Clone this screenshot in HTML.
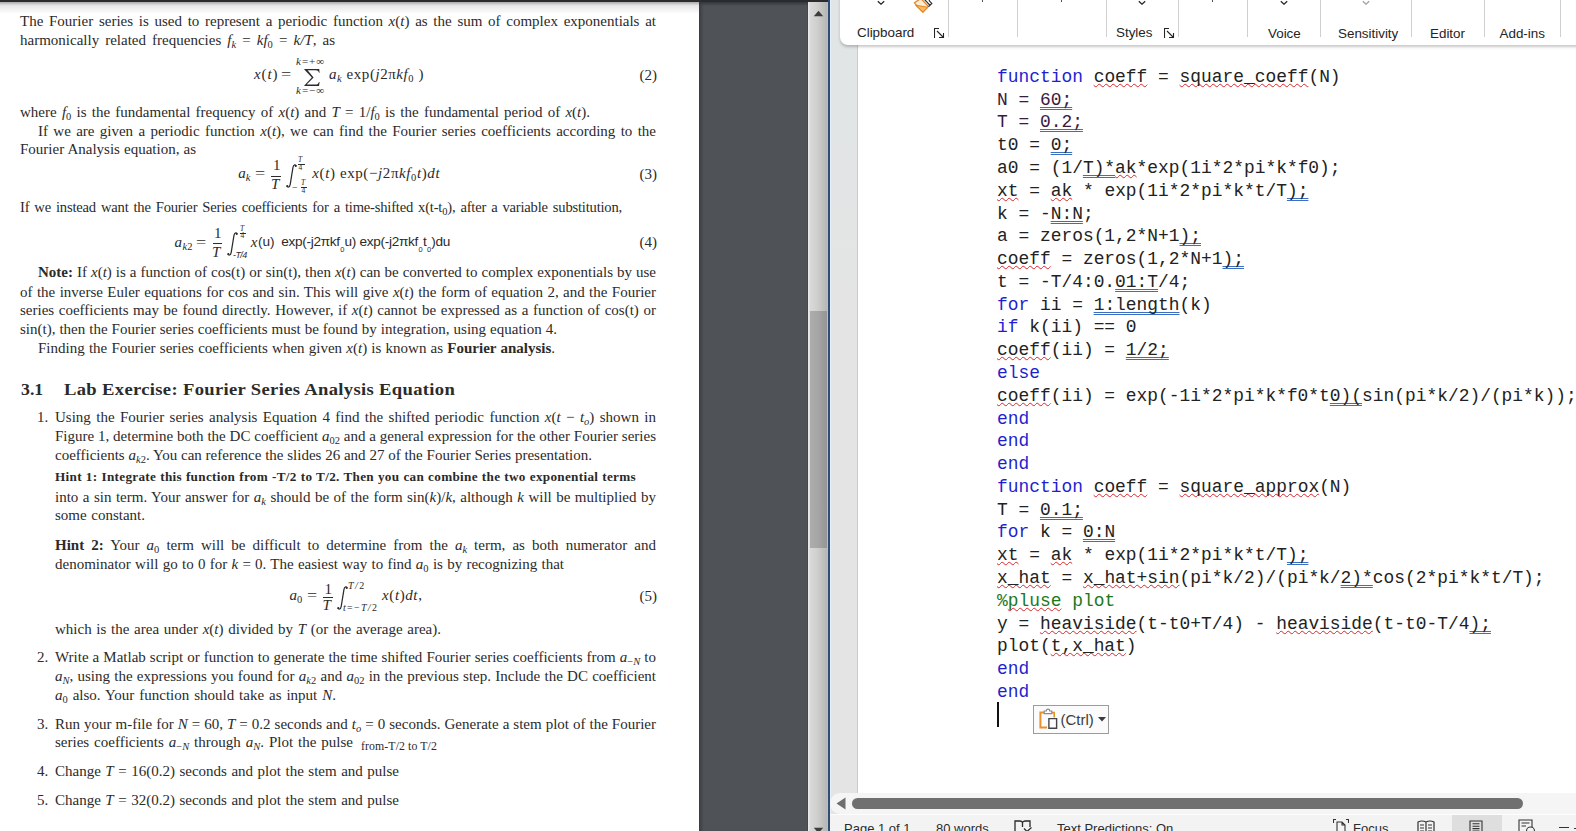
<!DOCTYPE html>
<html><head><meta charset="utf-8">
<style>
*{margin:0;padding:0;box-sizing:border-box}
html,body{width:1576px;height:831px;overflow:hidden;background:#fff;position:relative}
#pdf{position:absolute;left:0;top:0;width:699px;height:831px;background:#fff;overflow:hidden}
#topbar{position:absolute;left:0;top:0;width:828px;height:2px;background:#2a2b2e}
#topshadow{position:absolute;left:0;top:2px;width:699px;height:12px;background:linear-gradient(#a9a9a9,#e6e6e6 30%,rgba(255,255,255,0) 100%)}
#dark{position:absolute;left:699px;top:0;width:109px;height:831px;background:#4f5357;border-right:1px solid #45474a}
#darkshadow{position:absolute;left:699px;top:0;width:5px;height:831px;background:linear-gradient(90deg,#3a3d40,rgba(81,84,88,0))}
#darktop{position:absolute;left:699px;top:2px;width:109px;height:4px;background:linear-gradient(#33363a,rgba(81,84,88,0))}
#vscroll{position:absolute;left:808px;top:2px;width:20px;height:829px;background:linear-gradient(90deg,#e8e9ea 0,#e8e9ea 5%,#d9d9d9 10%,#cfcfce 45%,#c3c3c1 70%,#b5b7b7 95%,#c4c8cc 100%)}
#vthumb{position:absolute;left:810px;top:311px;width:17px;height:237px;background:linear-gradient(90deg,#adadad,#a5a5a5 50%,#9b9b9d 80%,#949695)}
#blue{position:absolute;left:828px;top:0;width:2px;height:831px;background:#334c72}
.t{position:absolute;font-family:"Liberation Serif",serif;font-size:15px;line-height:18px;height:18px;color:#2b2b2b;white-space:nowrap}
.j{text-align:justify;text-align-last:justify;white-space:normal;overflow:visible}
.t i,.m i{font-style:italic}
.sb{font-size:10.5px;position:relative;top:3px;line-height:0}
.sp{font-size:10.5px;position:relative;top:-5px;line-height:0}
.m{position:absolute;font-family:"Liberation Serif",serif;font-size:15px;line-height:18px;color:#2b2b2b;white-space:nowrap}
.ab{position:absolute;white-space:nowrap;color:#2b2b2b}
.sb2{font-size:10.5px;position:relative;top:3px;line-height:0}
.sb3{font-size:7.5px;position:relative;top:6.5px;line-height:0;margin:0 0.5px}
.eqn{position:absolute;left:636px;font-family:"Liberation Serif",serif;font-size:15px;line-height:18px;color:#1c1c1c}
</style></head><body>
<div id="pdf">
<!-- text lines -->
<div class="t j" style="left:20px;top:12.0px;width:636px;">The Fourier series is used to represent a periodic function <i>x</i>(<i>t</i>) as the sum of complex exponentials at</div>
<div class="t j" style="left:20px;top:30.6px;width:315px;">harmonically related frequencies <i>f</i><span class="sb"><i>k</i></span> = <i>kf</i><span class="sb">0</span> = <i>k/T</i>, as</div>
<div class="t j" style="left:20px;top:103.0px;width:570px;">where <i>f</i><span class="sb">0</span> is the fundamental frequency of <i>x</i>(<i>t</i>) and <i>T</i> = 1/<i>f</i><span class="sb">0</span> is the fundamental period of <i>x</i>(<i>t</i>).</div>
<div class="t j" style="left:38px;top:121.5px;width:618px;">If we are given a periodic function <i>x</i>(<i>t</i>), we can find the Fourier series coefficients according to the</div>
<div class="t j" style="left:20px;top:140.0px;width:176px;">Fourier Analysis equation, as</div>
<div class="t j" style="left:20px;top:198.0px;width:602px;font-size:14.6px;letter-spacing:-0.2px">If we instead want the Fourier Series coefficients for a time-shifted x(t-t<span class="sb">0</span>), after a variable substitution,</div>
<div class="t j" style="left:38px;top:263.3px;width:618px;"><b>Note:</b> If <i>x</i>(<i>t</i>) is a function of cos(t) or sin(t), then <i>x</i>(<i>t</i>) can be converted to complex exponentials by use</div>
<div class="t j" style="left:20px;top:283.0px;width:636px;">of the inverse Euler equations for cos and sin. This will give <i>x</i>(<i>t</i>) the form of equation 2, and the Fourier</div>
<div class="t j" style="left:20px;top:301.0px;width:636px;">series coefficients may be found directly. However, if <i>x</i>(<i>t</i>) cannot be expressed as a function of cos(t) or</div>
<div class="t j" style="left:20px;top:320.2px;width:537px;">sin(t), then the Fourier series coefficients must be found by integration, using equation 4.</div>
<div class="t j" style="left:38px;top:338.6px;width:517px;">Finding the Fourier series coefficients when given <i>x</i>(<i>t</i>) is known as <b>Fourier analysis</b>.</div>
<div class="t" style="left:20.5px;top:378.7px;height:22px;line-height:22px;font-size:16.6px;font-weight:bold;transform:scaleX(1.07);transform-origin:left">3.1</div>
<div class="t" style="left:64px;top:378.7px;height:22px;line-height:22px;font-size:16.6px;font-weight:bold;letter-spacing:0.3px;transform:scaleX(1.12);transform-origin:left">Lab Exercise: Fourier Series Analysis Equation</div>
<div class="t" style="left:37px;top:408.0px">1.</div>
<div class="t j" style="left:55px;top:408.0px;width:601px;">Using the Fourier series analysis Equation 4 find the shifted periodic function <i>x</i>(<i>t</i> − <i>t</i><span class="sb"><i>o</i></span>) shown in</div>
<div class="t j" style="left:55px;top:427.0px;width:601px;">Figure 1, determine both the DC coefficient <i>a</i><span class="sb">02</span> and a general expression for the other Fourier series</div>
<div class="t j" style="left:55px;top:445.7px;width:537px;">coefficients <i>a</i><span class="sb"><i>k</i>2</span>. You can reference the slides 26 and 27 of the Fourier Series presentation.</div>
<div class="t j" style="left:55px;top:468.3px;width:581px;font-weight:bold;font-size:13.2px;letter-spacing:0.3px;color:#2a2a2a">Hint 1: Integrate this function from -T/2 to T/2. Then you can combine the two exponential terms</div>
<div class="t j" style="left:55px;top:487.6px;width:601px;">into a sin term. Your answer for <i>a</i><span class="sb"><i>k</i></span> should be of the form sin(<i>k</i>)/<i>k</i>, although <i>k</i> will be multiplied by</div>
<div class="t j" style="left:55px;top:506.4px;width:90px;">some constant.</div>
<div class="t j" style="left:55px;top:535.8px;width:601px;"><b>Hint 2:</b> Your <i>a</i><span class="sb">0</span> term will be difficult to determine from the <i>a</i><span class="sb"><i>k</i></span> term, as both numerator and</div>
<div class="t j" style="left:55px;top:555.0px;width:509px;">denominator will go to 0 for <i>k</i> = 0. The easiest way to find <i>a</i><span class="sb">0</span> is by recognizing that</div>
<div class="t j" style="left:55px;top:619.7px;width:386px;">which is the area under <i>x</i>(<i>t</i>) divided by <i>T</i> (or the average area).</div>
<div class="t" style="left:37px;top:647.5px">2.</div>
<div class="t j" style="left:55px;top:647.5px;width:601px;">Write a Matlab script or function to generate the time shifted Fourier series coefficients from <i>a</i><span class="sb">−<i>N</i></span> to</div>
<div class="t j" style="left:55px;top:667.2px;width:601px;"><i>a</i><span class="sb"><i>N</i></span>, using the expressions you found for <i>a</i><span class="sb"><i>k</i>2</span> and <i>a</i><span class="sb">02</span> in the previous step. Include the DC coefficient</div>
<div class="t j" style="left:55px;top:685.6px;width:281px;"><i>a</i><span class="sb">0</span> also. Your function should take as input <i>N</i>.</div>
<div class="t" style="left:37px;top:714.7px">3.</div>
<div class="t j" style="left:55px;top:714.7px;width:601px;">Run your m-file for <i>N</i> = 60, <i>T</i> = 0.2 seconds and <i>t</i><span class="sb"><i>o</i></span> = 0 seconds. Generate a stem plot of the Fourier</div>
<div class="t j" style="left:55px;top:733.2px;width:298px;">series coefficients <i>a</i><span class="sb">−<i>N</i></span> through <i>a</i><span class="sb"><i>N</i></span>. Plot the pulse</div>
<div class="t" style="left:361px;top:737px;font-size:11.8px;letter-spacing:0.1px;color:#2a2a2a">from-T/2 to T/2</div>
<div class="t" style="left:37px;top:761.7px">4.</div>
<div class="t j" style="left:55px;top:761.7px;width:344px;">Change <i>T</i> = 16(0.2) seconds and plot the stem and pulse</div>
<div class="t" style="left:37px;top:790.6px">5.</div>
<div class="t j" style="left:55px;top:790.6px;width:344px;">Change <i>T</i> = 32(0.2) seconds and plot the stem and pulse</div>
<!-- eq -->
<span class="ab" style="left:254px;top:65.24px;font-size:15px;line-height:18.00px;font-family:'Liberation Serif',serif;letter-spacing:0.9px"><i>x</i>(<i>t</i>)</span>
<span class="ab" style="left:280.5px;top:65.24px;font-size:15px;line-height:18.00px;font-family:'Liberation Serif',serif;transform:scaleX(1.2);transform-origin:left">=</span>
<svg class="ab" style="left:303.5px;top:69px" width="16" height="17" viewBox="0 0 16 17"><path d="M0.3,0 H15.2 L15.6,3.8 H15 C14.6,2.2 13.8,1.3 11.8,1.3 H3.6 L9.6,8.4 L2.6,15.6 H11.6 C13.6,15.6 14.4,14.6 15,13 H15.6 L15,17 H0.3 V16.4 L7.8,8.6 L0.3,0.6 Z" fill="#2b2b2b"/></svg>
<span class="ab" style="left:296px;top:54.69px;font-size:11px;line-height:13.20px;font-family:'Liberation Serif',serif;letter-spacing:1px"><i>k</i>=+∞</span>
<span class="ab" style="left:296px;top:84.49px;font-size:11px;line-height:13.20px;font-family:'Liberation Serif',serif;letter-spacing:1px"><i>k</i>=−∞</span>
<span class="ab" style="left:329px;top:65.24px;font-size:15px;line-height:18.00px;font-family:'Liberation Serif',serif;letter-spacing:0.55px"><i>a</i><span class="sb2"><i>k</i></span> exp(<i>j</i>2π<i>kf</i><span class="sb2">0</span> )</span>
<span class="ab" style="left:639.5px;top:65.54px;font-size:15px;line-height:18.00px;font-family:'Liberation Serif',serif;">(2)</span>
<span class="ab" style="left:238.3px;top:164.44px;font-size:15px;line-height:18.00px;font-family:'Liberation Serif',serif;"><i>a</i><span class="sb2"><i>k</i></span></span>
<span class="ab" style="left:255px;top:164.44px;font-size:15px;line-height:18.00px;font-family:'Liberation Serif',serif;transform:scaleX(1.2);transform-origin:left">=</span>
<span class="ab" style="left:273px;top:155.64px;font-size:15px;line-height:18.00px;font-family:'Liberation Serif',serif;">1</span>
<div class="ab" style="left:271px;top:175.6px;width:10px;height:1.1px;background:#2b2b2b"></div>
<span class="ab" style="left:271px;top:174.64px;font-size:15px;line-height:18.00px;font-family:'Liberation Serif',serif;"><i>T</i></span>
<svg class="ab" style="left:285.5px;top:163px" width="11" height="26" viewBox="0 0 12 26"><path d="M11.2,2.2 C10.6,0.2 8.3,0.3 7.6,3.6 L4.6,22.2 C4,25.6 1.8,25.8 0.9,23.9" stroke="#2b2b2b" stroke-width="1.35" fill="none"/><circle cx="10.6" cy="2" r="1.1" fill="#2b2b2b"/><circle cx="1.4" cy="24" r="1.1" fill="#2b2b2b"/></svg>
<span class="ab" style="left:298px;top:155.47px;font-size:7.5px;line-height:9.00px;font-family:'Liberation Serif',serif;"><i>T</i></span>
<div class="ab" style="left:297.8px;top:164.2px;width:6.899999999999977px;height:0.8px;background:#2b2b2b"></div>
<span class="ab" style="left:298.5px;top:163.17px;font-size:7.5px;line-height:9.00px;font-family:'Liberation Serif',serif;">4</span>
<span class="ab" style="left:292px;top:181.62px;font-size:10px;line-height:12.00px;font-family:'Liberation Serif',serif;">−</span>
<span class="ab" style="left:301px;top:178.47px;font-size:7.5px;line-height:9.00px;font-family:'Liberation Serif',serif;"><i>T</i></span>
<div class="ab" style="left:300.5px;top:187px;width:6.5px;height:0.8px;background:#2b2b2b"></div>
<span class="ab" style="left:301.5px;top:186.17px;font-size:7.5px;line-height:9.00px;font-family:'Liberation Serif',serif;">4</span>
<span class="ab" style="left:312.3px;top:164.44px;font-size:15px;line-height:18.00px;font-family:'Liberation Serif',serif;letter-spacing:0.6px"><i>x</i>(<i>t</i>) exp(−<i>j</i>2π<i>kf</i><span class="sb2">0</span><i>t</i>)<i>dt</i></span>
<span class="ab" style="left:639.5px;top:164.74px;font-size:15px;line-height:18.00px;font-family:'Liberation Serif',serif;">(3)</span>
<span class="ab" style="left:174.5px;top:232.64px;font-size:15px;line-height:18.00px;font-family:'Liberation Serif',serif;letter-spacing:0.5px"><i>a</i><span class="sb2" style="letter-spacing:0"><i>k</i>2</span></span>
<span class="ab" style="left:196px;top:232.64px;font-size:15px;line-height:18.00px;font-family:'Liberation Serif',serif;letter-spacing:0;transform:scaleX(1.2);transform-origin:left">=</span>
<span class="ab" style="left:214px;top:223.94px;font-size:15px;line-height:18.00px;font-family:'Liberation Serif',serif;">1</span>
<div class="ab" style="left:212.5px;top:243.4px;width:9.5px;height:1.1px;background:#2b2b2b"></div>
<span class="ab" style="left:212px;top:242.94px;font-size:15px;line-height:18.00px;font-family:'Liberation Serif',serif;"><i>T</i></span>
<svg class="ab" style="left:226.5px;top:231px" width="11" height="26" viewBox="0 0 12 26"><path d="M11.2,2.2 C10.6,0.2 8.3,0.3 7.6,3.6 L4.6,22.2 C4,25.6 1.8,25.8 0.9,23.9" stroke="#2b2b2b" stroke-width="1.35" fill="none"/><circle cx="10.6" cy="2" r="1.1" fill="#2b2b2b"/><circle cx="1.4" cy="24" r="1.1" fill="#2b2b2b"/></svg>
<span class="ab" style="left:240px;top:223.77px;font-size:7.5px;line-height:9.00px;font-family:'Liberation Serif',serif;"><i>T</i></span>
<div class="ab" style="left:239.5px;top:232.5px;width:6.5px;height:0.8px;background:#2b2b2b"></div>
<span class="ab" style="left:240.5px;top:231.47px;font-size:7.5px;line-height:9.00px;font-family:'Liberation Serif',serif;">4</span>
<span class="ab" style="left:233px;top:249.78px;font-size:9px;line-height:10.80px;font-family:'Liberation Sans',sans-serif;letter-spacing:-0.6px">-<i>T/4</i></span>
<span class="ab" style="left:250.7px;top:232.64px;font-size:15px;line-height:18.00px;font-family:'Liberation Serif',serif;"><i>x</i></span>
<span class="ab" style="left:258px;top:233.83px;font-size:13.6px;line-height:16.32px;font-family:'Liberation Sans',sans-serif;">(u)</span>
<span class="ab" style="left:281.2px;top:233.83px;font-size:13.6px;line-height:16.32px;font-family:'Liberation Sans',sans-serif;letter-spacing:-0.3px">exp(-j2πkf<span class="sb3">0</span>u) exp(-j2πkf<span class="sb3">0</span>t<span class="sb3">0</span>)du</span>
<span class="ab" style="left:639.5px;top:233.14px;font-size:15px;line-height:18.00px;font-family:'Liberation Serif',serif;">(4)</span>
<span class="ab" style="left:289.6px;top:586.34px;font-size:15px;line-height:18.00px;font-family:'Liberation Serif',serif;"><i>a</i><span class="sb2">0</span></span>
<span class="ab" style="left:306.5px;top:586.34px;font-size:15px;line-height:18.00px;font-family:'Liberation Serif',serif;transform:scaleX(1.2);transform-origin:left">=</span>
<span class="ab" style="left:324.5px;top:579.74px;font-size:15px;line-height:18.00px;font-family:'Liberation Serif',serif;">1</span>
<div class="ab" style="left:322.6px;top:596.8px;width:10.199999999999989px;height:1.1px;background:#2b2b2b"></div>
<span class="ab" style="left:322.6px;top:596.44px;font-size:15px;line-height:18.00px;font-family:'Liberation Serif',serif;"><i>T</i></span>
<svg class="ab" style="left:336.5px;top:584.6px" width="11" height="26" viewBox="0 0 12 26"><path d="M11.2,2.2 C10.6,0.2 8.3,0.3 7.6,3.6 L4.6,22.2 C4,25.6 1.8,25.8 0.9,23.9" stroke="#2b2b2b" stroke-width="1.35" fill="none"/><circle cx="10.6" cy="2" r="1.1" fill="#2b2b2b"/><circle cx="1.4" cy="24" r="1.1" fill="#2b2b2b"/></svg>
<span class="ab" style="left:348px;top:580.12px;font-size:10px;line-height:12.00px;font-family:'Liberation Serif',serif;letter-spacing:1.5px"><i>T/</i>2</span>
<span class="ab" style="left:343px;top:602.12px;font-size:10px;line-height:12.00px;font-family:'Liberation Serif',serif;letter-spacing:1.3px"><i>t</i>=−<i>T/</i>2</span>
<span class="ab" style="left:382px;top:586.34px;font-size:15px;line-height:18.00px;font-family:'Liberation Serif',serif;letter-spacing:0.6px"><i>x</i>(<i>t</i>)<i>dt</i>,</span>
<span class="ab" style="left:639.5px;top:586.74px;font-size:15px;line-height:18.00px;font-family:'Liberation Serif',serif;">(5)</span>
</div>
<div id="topshadow"></div>
<div id="dark"></div><div id="darkshadow"></div><div id="darktop"></div>
<div id="topbar"></div>
<div id="vscroll"></div><div id="vthumb"></div>
<div id="blue"></div>












<!-- right -->

<style>
#wbg{position:absolute;left:830px;top:0;width:746px;height:831px;background:linear-gradient(#e1e5e6 0px,#e1e5e6 90px,#e4e4e4 290px,#e4e4e4 831px)}
#wlight{position:absolute;left:830px;top:0;width:1px;height:831px;background:#e3effa}
#wpage{position:absolute;left:857px;top:0;width:719px;height:793px;background:#fff;border-left:1px solid #c9caca}
#ribbon{position:absolute;left:840px;top:-12px;width:760px;height:57px;background:#fff;border-radius:8px;box-shadow:0 1.5px 3px rgba(0,0,0,0.22)}
.rl{position:absolute;font-family:'Liberation Sans',sans-serif;font-size:13.4px;line-height:16px;color:#242424;white-space:nowrap}
.sep{position:absolute;top:0;width:1px;height:37px;background:#d0d0d0}
.code{position:absolute;left:997px;font-family:'Liberation Mono',monospace;font-size:17.9px;line-height:22.78px;color:#222;white-space:pre}
.kw{color:#1f1fcf}
.cm{color:#1c781c}
.pu{color:#3a1a3e}
.rw{text-decoration:underline wavy #d8262c;text-decoration-thickness:1.3px;text-underline-offset:0.5px;text-decoration-skip-ink:none}
.bd{text-decoration:underline double #3c6fc0;text-decoration-thickness:1px;text-underline-offset:2px;text-decoration-skip-ink:none}
#hscroll{position:absolute;left:830px;top:793px;width:746px;height:21px;background:#f5f5f5;border-radius:10px 0 0 10px}
#hthumb{position:absolute;left:852px;top:798px;width:671px;height:11px;background:#707070;border-radius:5.5px}
#status{position:absolute;left:830px;top:814px;width:746px;height:17px;background:#f3f3f3;border-top:1px solid #fdfdfd}
.st{position:absolute;top:820.5px;font-family:'Liberation Sans',sans-serif;font-size:13px;line-height:16px;color:#2b2b2b;white-space:nowrap}
</style>
<div id="wbg"></div><div id="wlight"></div><div id="wpage"></div>
<div id="ribbon"></div>
<div class="rl" style="left:857px;top:25.0px">Clipboard</div>
<div class="rl" style="left:1116px;top:25.0px">Styles</div>
<div class="rl" style="left:1268px;top:25.9px">Voice</div>
<div class="rl" style="left:1338px;top:25.9px">Sensitivity</div>
<div class="rl" style="left:1430px;top:25.9px">Editor</div>
<div class="rl" style="left:1499.5px;top:25.9px">Add-ins</div>
<div class="sep" style="left:948px"></div>
<div class="sep" style="left:1017px"></div>
<div class="sep" style="left:1106px"></div>
<div class="sep" style="left:1178px"></div>
<div class="sep" style="left:1247px"></div>
<div class="sep" style="left:1320px"></div>
<div class="sep" style="left:1411px"></div>
<div class="sep" style="left:1484px"></div>
<div class="sep" style="left:1560px"></div>
<svg style="position:absolute;left:934px;top:28px" width="11" height="11" viewBox="0 0 11 11"><path d="M0.5,10 V0.5 H5 M3,3 L9.5,9.5 M9.5,5 V9.5 H5" stroke="#242424" stroke-width="1.1" fill="none"/></svg>
<svg style="position:absolute;left:1164px;top:28px" width="11" height="11" viewBox="0 0 11 11"><path d="M0.5,10 V0.5 H5 M3,3 L9.5,9.5 M9.5,5 V9.5 H5" stroke="#242424" stroke-width="1.1" fill="none"/></svg>
<svg style="position:absolute;left:876.5px;top:0" width="8" height="5" viewBox="0 0 8 5"><path d="M0.8,1.3 L4,4.2 L7.2,1.3" stroke="#242424" stroke-width="1.25" fill="none"/></svg>
<svg style="position:absolute;left:1279.5px;top:0" width="8" height="5" viewBox="0 0 8 5"><path d="M0.8,1.3 L4,4.2 L7.2,1.3" stroke="#242424" stroke-width="1.25" fill="none"/></svg>
<svg style="position:absolute;left:1361.5px;top:0" width="8" height="5" viewBox="0 0 8 5"><path d="M0.8,1.3 L4,4.2 L7.2,1.3" stroke="#a0a0a0" stroke-width="1.25" fill="none"/></svg>
<svg style="position:absolute;left:1138px;top:0" width="8" height="5" viewBox="0 0 8 5"><path d="M0.8,1.3 L4,4.2 L7.2,1.3" stroke="#242424" stroke-width="1.25" fill="none"/></svg>
<div style="position:absolute;left:982px;top:0;width:1px;height:1.5px;background:#555"></div>
<div style="position:absolute;left:1061px;top:0;width:1px;height:1.5px;background:#555"></div>
<div style="position:absolute;left:1212px;top:0;width:1px;height:1.5px;background:#555"></div>
<svg style="position:absolute;left:905px;top:0" width="30" height="14" viewBox="0 0 30 14"><path d="M9.4,2.8 L15.8,-1.5 L23.3,6.3 L17.9,12.2 Z" fill="#fdecd2" stroke="#e0862a" stroke-width="1.25" stroke-linejoin="round"/><path d="M10.8,5.3 L22.8,7.3 L17.9,12.2 Z" fill="#f7bb5e" stroke="#e0862a" stroke-width="1.1" stroke-linejoin="round"/><path d="M19.5,-0.5 L24.8,5.2 M24.3,-0.5 V0.8 L26.8,3.4 L23.6,6.6" fill="none" stroke="#262626" stroke-width="1.15"/></svg>
<div class="code" style="top:65.86px"><span class="kw">function</span> <span class="rw">coeff</span> = <span class="rw">square_coeff</span>(N)</div>
<div class="code" style="top:88.64px"><span class="pu">N = <span class="bd">60;</span></span></div>
<div class="code" style="top:111.42px"><span class="pu">T = <span class="bd">0.2;</span></span></div>
<div class="code" style="top:134.20px">t0 = <span class="bd">0;</span></div>
<div class="code" style="top:156.98px">a0 = (1/<span class="bd">T)*</span><span class="rw">ak</span>*exp(1i*2*pi*k*f0);</div>
<div class="code" style="top:179.76px"><span class="rw">xt</span> = <span class="rw">ak</span> * exp(1i*2*pi*k*t/T<span class="bd">);</span></div>
<div class="code" style="top:202.54px">k = -<span class="bd">N:N</span>;</div>
<div class="code" style="top:225.32px">a = zeros(1,2*N+1<span class="bd">);</span></div>
<div class="code" style="top:248.10px"><span class="rw">coeff</span> = zeros(1,2*N+1<span class="bd">);</span></div>
<div class="code" style="top:270.88px">t = -T/4:0.<span class="bd">01:T</span>/4;</div>
<div class="code" style="top:293.66px"><span class="kw">for</span> ii = <span class="bd">1:length</span>(k)</div>
<div class="code" style="top:316.44px"><span class="kw">if</span> k(ii) == 0</div>
<div class="code" style="top:339.22px"><span class="rw">coeff</span>(ii) = <span class="bd">1/2;</span></div>
<div class="code" style="top:362.00px"><span class="kw">else</span></div>
<div class="code" style="top:384.78px"><span class="rw">coeff</span>(ii) = exp(-1i*2*pi*k*f0*t<span class="bd">0)(</span>sin(pi*k/2)/(pi*k));</div>
<div class="code" style="top:407.56px"><span class="kw">end</span></div>
<div class="code" style="top:430.34px"><span class="kw">end</span></div>
<div class="code" style="top:453.12px"><span class="kw">end</span></div>
<div class="code" style="top:475.90px"><span class="kw">function</span> <span class="rw">coeff</span> = <span class="rw">square_approx</span>(N)</div>
<div class="code" style="top:498.68px">T = <span class="bd">0.1;</span></div>
<div class="code" style="top:521.46px"><span class="kw">for</span> k = <span class="bd">0:N</span></div>
<div class="code" style="top:544.24px"><span class="rw">xt</span> = <span class="rw">ak</span> * exp(1i*2*pi*k*t/T<span class="bd">);</span></div>
<div class="code" style="top:567.02px"><span class="rw">x_hat</span> = <span class="rw">x_hat+sin</span>(pi*k/2)/(pi*k/<span class="bd">2)*</span>cos(2*pi*k*t/T);</div>
<div class="code" style="top:589.80px"><span class="cm">%<span class="rw">pluse</span> plot</span></div>
<div class="code" style="top:612.58px">y = <span class="rw">heaviside</span>(t-t0+T/4) - <span class="rw">heaviside</span>(t-t0-T/4<span class="bd">);</span></div>
<div class="code" style="top:635.36px">plot(<span class="rw">t,x_hat</span>)</div>
<div class="code" style="top:658.14px"><span class="kw">end</span></div>
<div class="code" style="top:680.92px"><span class="kw">end</span></div>
<div style="position:absolute;left:997px;top:702px;width:1.5px;height:25px;background:#111"></div>
<div style="position:absolute;left:1033px;top:705px;width:76px;height:29px;background:#fbfbfb;border:1px solid #9c9c9c"></div>
<svg style="position:absolute;left:1038px;top:708px" width="22" height="22" viewBox="0 0 22 22"><path d="M6,4.6 H2.4 V19.6 H9" fill="none" stroke="#e8922e" stroke-width="2"/><path d="M14,4.6 H16.2 V9.5" fill="none" stroke="#e8922e" stroke-width="1.6"/><path d="M6.2,5.6 V3 H8.3 C8.3,0.6 11.7,0.6 11.7,3 H13.8 V5.6 Z" fill="#fff" stroke="#8a8a8a" stroke-width="1.2"/><path d="M10.9,10.6 H18.6 V20.2 H10.9 Z" fill="#fff" stroke="#454545" stroke-width="1.4"/></svg>
<div style="position:absolute;left:1060.5px;top:711px;font-family:'Liberation Sans',sans-serif;font-size:15px;line-height:17px;color:#3c3c3c">(Ctrl)</div>
<svg style="position:absolute;left:1097.5px;top:717px" width="8" height="5" viewBox="0 0 8 5"><path d="M0,0 H8 L4,4.5 Z" fill="#3a3a3a"/></svg>
<div id="hscroll"></div>
<svg style="position:absolute;left:813px;top:10px" width="11" height="7" viewBox="0 0 11 7"><path d="M0.8,6.2 H10.2 L5.5,0.8 Z" fill="#3c3c3c"/></svg>
<svg style="position:absolute;left:813px;top:827px" width="11" height="7" viewBox="0 0 11 7"><path d="M0.8,0.8 H10.2 L5.5,6.2 Z" fill="#3c3c3c"/></svg>
<svg style="position:absolute;left:836px;top:797px" width="10" height="13" viewBox="0 0 10 13"><path d="M9.5,0.5 V12.5 L0.5,6.5 Z" fill="#6e6e6e"/></svg>
<div id="hthumb"></div>
<div id="status"></div>
<div class="st" style="left:844px">Page 1 of 1</div>
<div class="st" style="left:936px">80 words</div>
<div class="st" style="left:1057px">Text Predictions: On</div>
<div class="st" style="left:1353px">Focus</div>
<div style="position:absolute;left:1452px;top:815px;width:50px;height:16px;background:#dedede"></div>
<svg style="position:absolute;left:1014px;top:820px" width="19" height="11" viewBox="0 0 19 11"><path d="M1,11 V1 H5.5 Q8.5,1 8.5,3.5 V7 M8.5,3.5 Q8.5,1 11.5,1 H16 V7" fill="none" stroke="#2a2a2a" stroke-width="1.3"/><path d="M10,8.5 L13,11.5 L17.5,7.5" fill="none" stroke="#2a2a2a" stroke-width="1.2"/></svg>
<svg style="position:absolute;left:1333px;top:819px" width="16" height="13" viewBox="0 0 16 13"><path d="M0.5,4 V0.5 H3 M13,0.5 H15.5 V4 M4,13 V3 H9 L12,6 V13 M9,3 V6 H12" fill="none" stroke="#333" stroke-width="1.1"/></svg>
<svg style="position:absolute;left:1417px;top:819.5px" width="18" height="13" viewBox="0 0 18 13"><path d="M1,13 V2 Q5,0 9,2 Q13,0 17,2 V13 M9,2 V13 M3,5 H7 M3,8 H7 M3,11 H7 M11,5 H15 M11,8 H15 M11,11 H15" fill="none" stroke="#333" stroke-width="1.2"/></svg>
<svg style="position:absolute;left:1469px;top:819.5px" width="14" height="13" viewBox="0 0 14 13"><path d="M1,1 H13 V13 H1 Z M3.5,3.8 H10.5 M3.5,6.2 H10.5 M3.5,8.6 H10.5 M3.5,11 H10.5" fill="none" stroke="#333" stroke-width="1.1"/></svg>
<svg style="position:absolute;left:1518px;top:819px" width="18" height="13" viewBox="0 0 18 13"><path d="M1,1 H14 V13 H1 Z M3.5,4 H11.5 M3.5,7 H8" fill="none" stroke="#333" stroke-width="1.1"/><circle cx="12.5" cy="12" r="4" fill="#f3f3f3" stroke="#333" stroke-width="1.1"/></svg>
<div style="position:absolute;left:1559px;top:827px;width:10px;height:1.4px;background:#333"></div>
<div style="position:absolute;left:1574px;top:828px;width:2px;height:1.4px;background:#333"></div>
<!-- /right -->
</body></html>
